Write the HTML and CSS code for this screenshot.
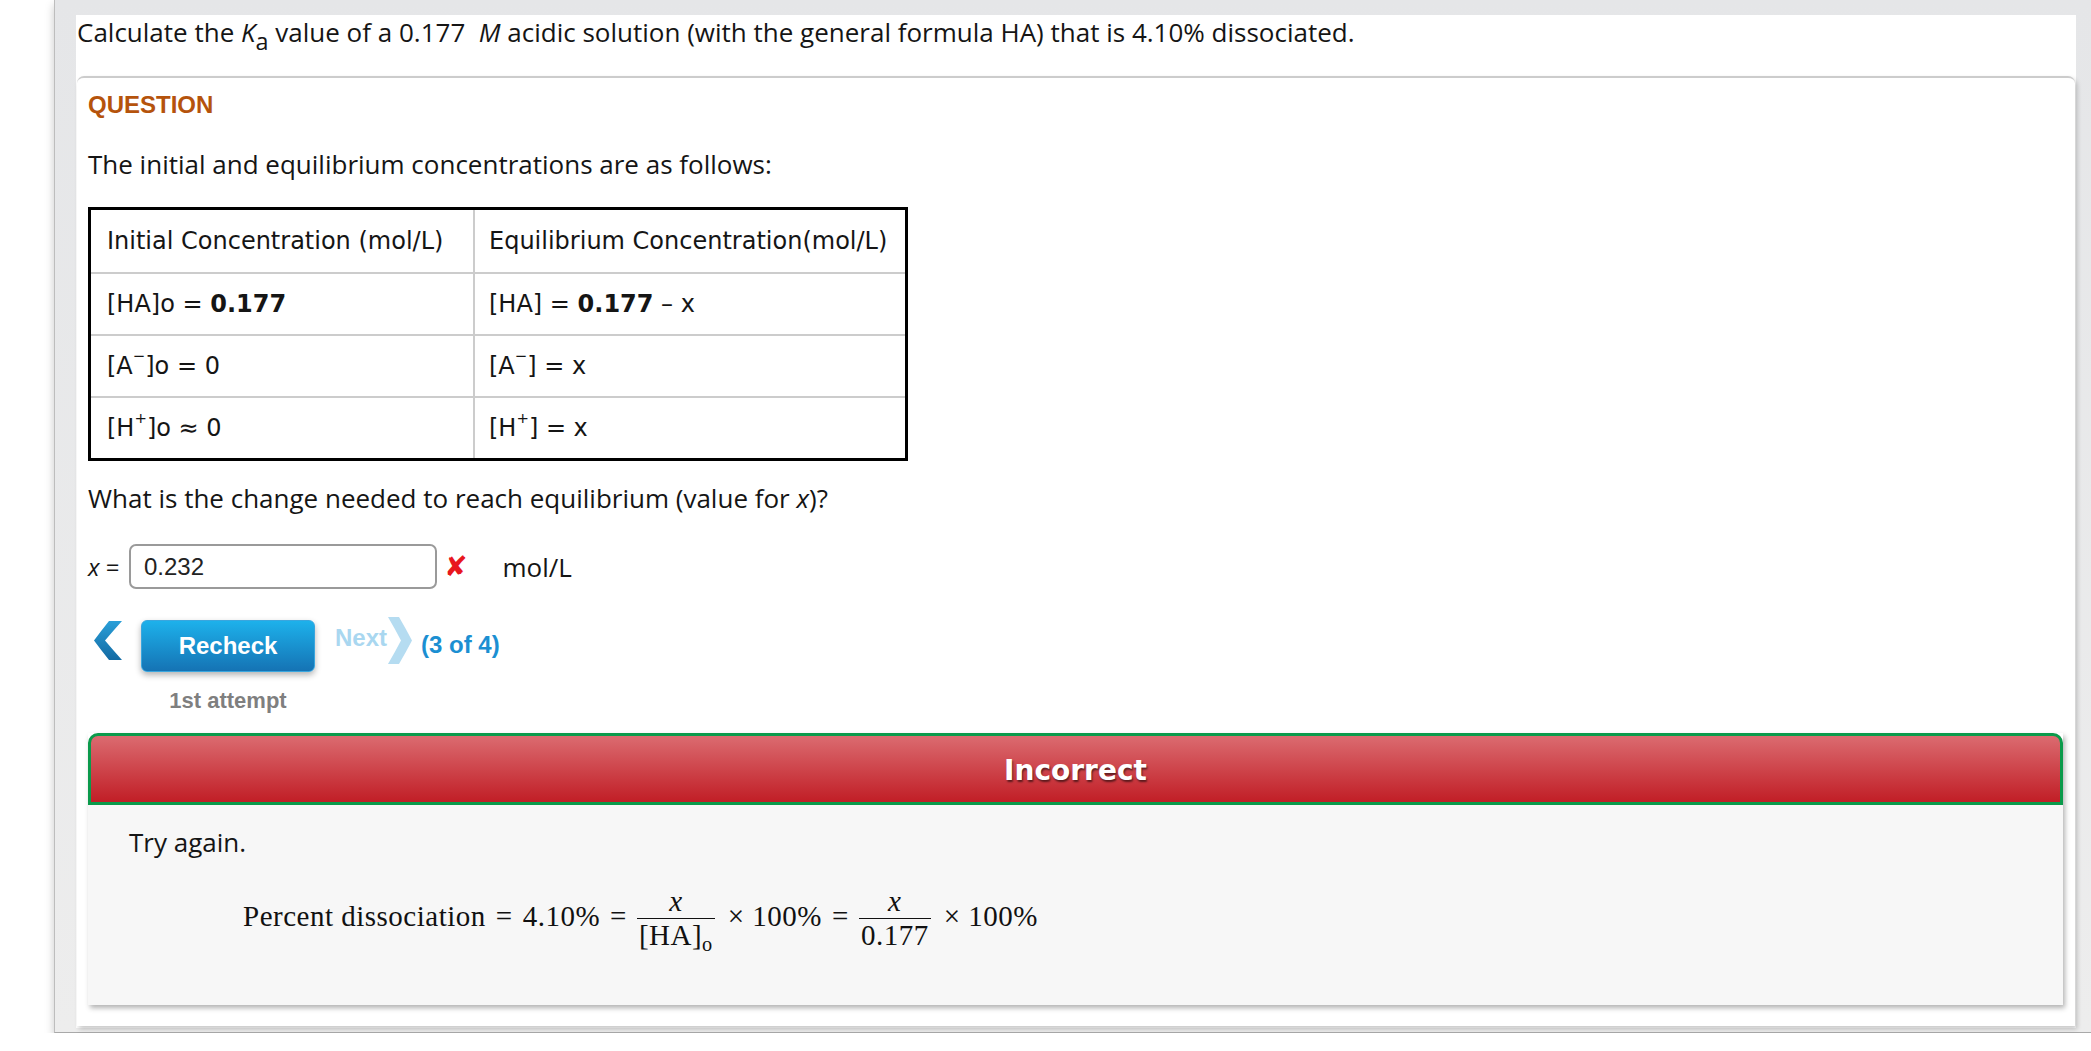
FILE: index.html
```html
<!DOCTYPE html>
<html lang="en">
<head>
<meta charset="utf-8">
<title>Question</title>
<link rel="stylesheet" href="styles.css">
</head>
<body>
<div class="frame">
  <div class="content">
    <p class="title">Calculate the <i>K</i><sub class="ka">a</sub> value of a 0.177&nbsp; <i>M</i> acidic solution (with the general formula HA) that is 4.10% dissociated.</p>
    <section class="card">
      <h2 class="q-label">QUESTION</h2>
      <p class="text first">The initial and equilibrium concentrations are as follows:</p>
      <div class="conc">
        <div class="cell head"><span>Initial Concentration (mol/L)</span></div>
        <div class="cell head c2"><span>Equilibrium Concentration(mol/L)</span></div>
        <div class="cell"><span>[HA]o = <b>0.177</b></span></div>
        <div class="cell c2"><span>[HA] = <b>0.177</b> &ndash; x</span></div>
        <div class="cell"><span>[A<sup>&minus;</sup>]o = 0</span></div>
        <div class="cell c2"><span>[A<sup>&minus;</sup>] = x</span></div>
        <div class="cell"><span>[H<sup>+</sup>]o &asymp; 0</span></div>
        <div class="cell c2"><span>[H<sup>+</sup>] = x</span></div>
      </div>
      <p class="text second">What is the change needed to reach equilibrium (value for <i>x</i>)?</p>
      <div class="answer-row">
        <span class="var"><i>x</i> =</span>
        <div class="input">0.232</div>
        <span class="wrong">&#x2718;</span>
        <span class="unit">mol/L</span>
      </div>
      <div class="nav">
        <svg class="prev" width="30" height="39" viewBox="0 0 30 39">
          <defs>
            <linearGradient id="gp" x1="0" y1="0" x2="0" y2="1">
              <stop offset="0" stop-color="#2a9fd8"/>
              <stop offset="1" stop-color="#136aa3"/>
            </linearGradient>
          </defs>
          <path d="M29 0 L16 0 Q8 10 1 19.5 Q8 29 16 39 L29 39 Q20 29 12 19.5 Q20 10 29 0 Z" fill="url(#gp)"/>
        </svg>
        <div class="btn-col">
          <div class="btn">Recheck</div>
          <div class="attempt">1st attempt</div>
        </div>
        <span class="next">Next</span>
        <svg class="next-chev" width="26" height="47" viewBox="0 0 26 47">
          <path d="M1 0 L12 0 Q19 12 25 23.5 Q19 35 12 47 L1 47 Q8 35 14 23.5 Q8 12 1 0 Z" fill="#b5dcf1"/>
        </svg>
        <span class="count">(3 of 4)</span>
      </div>
      <div class="feedback">
        <div class="fb-head">Incorrect</div>
        <div class="fb-body">
          <p class="try">Try again.</p>
          <div class="formula">
            <span>Percent dissociation</span>
            <span class="op">=</span>
            <span>4.10%</span>
            <span class="op">=</span>
            <span class="frac">
              <span class="num"><i>x</i></span>
              <span class="den">[HA]<sub>o</sub></span>
            </span>
            <span class="times">&times; 100%</span>
            <span class="op">=</span>
            <span class="frac">
              <span class="num"><i>x</i></span>
              <span class="den">0.177</span>
            </span>
            <span class="times">&times; 100%</span>
          </div>
        </div>
      </div>
    </section>
  </div>
</div>
</body>
</html>
```
FILE: styles.css
```css
html, body {
  margin: 0;
  padding: 0;
}
body {
  background: #ffffff;
  font-family: "Open Sans", "Liberation Sans", sans-serif;
  color: #151515;
}
.frame {
  margin-left: 54px;
  border-left: 1px solid #bdbdbd;
  border-bottom: 1px solid #a9a9a9;
  box-shadow: 0 5px 9px rgba(0, 0, 0, 0.22);
  background: linear-gradient(#e5e6e8, #ededed);
  padding: 15px 15px 4px 21px;
}
.content {
  background: #ffffff;
  padding: 0 1px 2px 1px;
}
.title {
  margin: 0 0 27px 0;
  font-size: 26px;
  line-height: 34px;
}
.ka {
  font-size: 0.9em;
  vertical-align: -0.35em;
  line-height: 0;
}
.card {
  background: #ffffff;
  border-top: 2px solid #cccccc;
  border-radius: 7px 7px 0 0;
  box-shadow: 2px 3px 5px rgba(0, 0, 0, 0.22);
  padding: 13px 12px 21px 11px;
}
.q-label {
  margin: 0;
  font-family: "Liberation Sans", Arial, sans-serif;
  font-weight: bold;
  font-size: 24px;
  line-height: 28px;
  color: #b5530c;
}
.text {
  margin: 0;
  font-size: 26px;
  line-height: 32px;
}
.text.first {
  margin-top: 29px;
}
.text.second {
  margin-top: 21px;
}
.conc {
  margin-top: 27px;
  width: 820px;
  box-sizing: border-box;
  border: 3px solid #000000;
  display: grid;
  grid-template-columns: 382px 1fr;
  gap: 2px;
  background: #cccccc;
  font-family: "DejaVu Sans", Verdana, sans-serif;
  font-size: 24px;
}
.cell {
  background: #ffffff;
  height: 60px;
  display: flex;
  align-items: center;
  padding-left: 16px;
  white-space: pre;
}
.cell > span {
  line-height: 30px;
}
.cell.head {
  height: 62px;
}
.cell.c2 {
  padding-left: 14px;
}
.cell sup {
  font-size: 0.62em;
  line-height: 0;
  vertical-align: 0.9em;
}
.answer-row {
  margin-top: 30px;
  display: flex;
  align-items: center;
  height: 45px;
}
.var {
  width: 41px;
  font-size: 24px;
  white-space: nowrap;
}
.input {
  width: 308px;
  height: 45px;
  box-sizing: border-box;
  border: 2px solid #9a9a9a;
  border-radius: 7px;
  padding-left: 13px;
  display: flex;
  align-items: center;
  font-family: "Liberation Sans", Arial, sans-serif;
  font-size: 24px;
  color: #222222;
}
.wrong {
  margin-left: 7px;
  font-family: "DejaVu Sans", sans-serif;
  font-size: 28px;
  color: #e8161d;
}
.unit {
  margin-left: 35px;
  font-size: 26px;
}
.nav {
  margin-top: 28px;
  display: flex;
  align-items: flex-start;
  font-family: "Liberation Sans", Arial, sans-serif;
  font-weight: bold;
}
.prev {
  margin-left: 5px;
  margin-top: 4px;
}
.btn-col {
  margin-left: 18px;
  margin-top: 3px;
  display: flex;
  flex-direction: column;
  align-items: center;
}
.btn {
  width: 174px;
  height: 52px;
  box-sizing: border-box;
  border: 1px solid #3aa6de;
  border-radius: 6px;
  background: linear-gradient(#1db1eb, #1573b4);
  box-shadow: 0 3px 6px rgba(0, 0, 0, 0.3);
  color: #ffffff;
  font-size: 24px;
  display: flex;
  align-items: center;
  justify-content: center;
}
.attempt {
  margin-top: 16px;
  font-size: 22px;
  line-height: 26px;
  color: #7f7f7f;
}
.next {
  margin-left: 20px;
  margin-top: 7px;
  font-size: 24px;
  line-height: 28px;
  color: #a9d7f0;
}
.count {
  margin-left: 8px;
  margin-top: 14px;
  font-size: 24px;
  line-height: 28px;
  color: #1b8fd2;
}
.feedback {
  margin-top: 19px;
  box-shadow: 2px 3px 5px rgba(0, 0, 0, 0.3);
}
.fb-head {
  height: 72px;
  box-sizing: border-box;
  border: 3px solid #0a9a4b;
  border-radius: 10px 10px 0 0;
  background: linear-gradient(#db6b70, #c11e26);
  display: flex;
  align-items: center;
  justify-content: center;
  padding-top: 3px;
  color: #ffffff;
  font-family: "DejaVu Sans", sans-serif;
  font-weight: bold;
  font-size: 28px;
  text-shadow: 1px 2px 2px rgba(0, 0, 0, 0.55);
}
.fb-body {
  background: #f7f7f7;
  height: 200px;
  box-sizing: border-box;
  padding: 21px 0 0 41px;
}
.try {
  margin: 0;
  font-size: 26px;
  line-height: 32px;
}
.formula {
  margin-top: 24px;
  margin-left: 114px;
  display: flex;
  align-items: center;
  font-family: "Liberation Serif", "Times New Roman", serif;
  font-size: 29px;
  letter-spacing: 0.5px;
  color: #111111;
}
.op {
  margin: 0 10px;
}
.frac {
  display: inline-flex;
  flex-direction: column;
  align-items: center;
  margin: 4px 0 0;
}
.num {
  line-height: 30px;
  padding: 0 2px 2px;
}
.den {
  border-top: 1.5px solid #111111;
  line-height: 32px;
  padding: 0 2px;
}
.den sub {
  font-size: 0.7em;
  vertical-align: -0.3em;
  line-height: 0;
}
.times {
  margin-left: 13px;
}
```
